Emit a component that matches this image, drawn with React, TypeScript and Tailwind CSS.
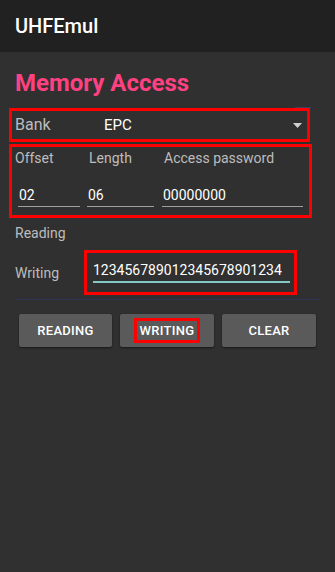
import React from "react";

export default function App() {
  const font = { fontFamily: "Roboto, 'Noto Sans', sans-serif" };
  return (
    <div className="w-full min-h-[572px] bg-[#303030]" style={font}>
      <div className="h-[52px] bg-[#212121] flex items-center px-[15px]">
        <span className="text-[20px] font-medium text-white leading-none">UHFEmul</span>
      </div>

      <div className="pt-[17px] px-[15px]">
        <div className="text-[24px] font-bold text-[#ff4081] leading-[28px]">Memory Access</div>
      </div>

      <div className="mt-[11px] px-[9px]">
        <div className="relative">
          <div className="absolute right-[15px] -top-[1px] w-[16px] h-[1px] bg-[#3a4266]" />
          <div className="h-[34px] w-[301px] border-[3px] border-[#ff0000] flex items-center pl-[3px] pr-[5px]">
            <span className="text-[16px] text-[#bdbdbd] w-[89px]">Bank</span>
            <span className="text-[15px] text-white flex-1">EPC</span>
            <svg width="9" height="5" viewBox="0 0 9 5" className="mt-[1px]">
              <path d="M0 0 L9 0 L4.5 5 Z" fill="#d0d0d0" />
            </svg>
          </div>
        </div>

        <div className="mt-[2px] w-[303px] h-[74px] border-[3px] border-[#ff0000] flex pt-[3px]">
          <div className="w-[75px] pl-[3px] flex flex-col">
            <span className="text-[14px] text-[#bdbdbd] leading-[16px]">Offset</span>
            <div className="ml-[3px] mt-[19px] w-[62px] border-b-[1.5px] border-[#9e9e9e] pl-[1px] text-[14px] text-white leading-[21px]">02</div>
          </div>
          <div className="w-[75px] flex flex-col">
            <span className="pl-[2px] text-[14px] text-[#bdbdbd] leading-[16px]">Length</span>
            <div className="mt-[19px] w-[67px] border-b-[1.5px] border-[#9e9e9e] pl-[1px] text-[14px] text-white leading-[21px]">06</div>
          </div>
          <div className="flex flex-col">
            <span className="pl-[2px] text-[14px] text-[#bdbdbd] leading-[16px]">Access password</span>
            <div className="mt-[19px] w-[141px] border-b-[1.5px] border-[#9e9e9e] pl-[1px] text-[14px] text-white leading-[21px]">00000000</div>
          </div>
        </div>
      </div>

      <div className="px-[15px] mt-[5px]">
        <div className="text-[14px] text-[#bdbdbd] leading-[20px]">Reading</div>
        <div className="mt-[7px] flex items-center">
          <span className="w-[69px] text-[14px] text-[#bdbdbd] leading-[20px]">Writing</span>
          <div className="w-[213px] h-[45px] border-[3px] border-[#ff0000] pl-[6px] pr-[4px] pt-[7px]">
            <div className="border-b-2 border-[#80cbc4] text-[14px] text-white leading-[20px] pb-[1px]">
              123456789012345678901234
            </div>
          </div>
        </div>
        <div className="mt-[4px] h-[1px] w-[305px] bg-[#2f3552]" />
      </div>

      <div className="mt-[14px] pl-[19px] flex gap-[8px]">
        <button className="w-[93px] h-[33px] rounded-[2px] bg-[#5a5a5a] shadow-[0_1px_2px_rgba(0,0,0,0.5)] text-white text-[13px] font-medium tracking-[0.3px]">
          READING
        </button>
        <button className="w-[94px] h-[33px] rounded-[2px] bg-[#5a5a5a] shadow-[0_1px_2px_rgba(0,0,0,0.5)] flex items-center justify-center">
          <span className="h-[25px] px-[3px] border-[3px] border-[#ff0000] flex items-center text-white text-[13px] font-medium tracking-[0.3px]">
            WRITING
          </span>
        </button>
        <button className="w-[94px] h-[33px] rounded-[2px] bg-[#5a5a5a] shadow-[0_1px_2px_rgba(0,0,0,0.5)] text-white text-[13px] font-medium tracking-[0.3px]">
          CLEAR
        </button>
      </div>
    </div>
  );
}
